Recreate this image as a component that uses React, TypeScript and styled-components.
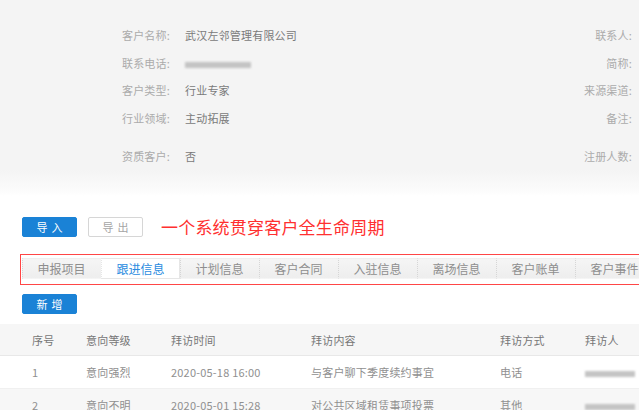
import styled, { createGlobalStyle } from "styled-components";

const GlobalStyle = createGlobalStyle`
    body {
        margin: 0;
        background: #ffffff;
        font-family: "Noto Sans CJK SC", "Liberation Sans", sans-serif;
    }
`;

const Page = styled.div`
    width: 639px;
    height: 410px;
    overflow: hidden;
    position: relative;
`;

const InfoPanel = styled.div`
    height: 196px;
    box-sizing: border-box;
    padding: 21px 7px 0 0;
    background: linear-gradient(to bottom, #f4f4f4 0, #f4f4f4 170px, #fbfbfb 190px, #ffffff 196px);
`;

const InfoRow = styled.div<{ $gap?: number }>`
    display: grid;
    grid-template-columns: 170px 1fr auto;
    height: 27.7px;
    align-items: center;
    margin-top: ${(p) => p.$gap || 0}px;
    font-size: 11px;
    letter-spacing: 0.2px;
`;

const Label = styled.span`
    color: #ababab;
    text-align: right;
`;

const Value = styled.span`
    color: #7a7a7a;
    padding-left: 15px;
`;

const Blur = styled.span<{ $w: number }>`
    display: inline-block;
    width: ${(p) => p.$w}px;
    height: 6px;
    background: #c4c4c4;
    filter: blur(1.2px);
    vertical-align: middle;
`;

const Content = styled.div`
    padding: 21px 0 0 22px;
`;

const Toolbar = styled.div`
    display: flex;
    align-items: center;
    height: 20px;
`;

const Button = styled.button<{ $primary?: boolean }>`
    width: 55px;
    height: 20px;
    box-sizing: border-box;
    border-radius: 2px;
    font-family: inherit;
    font-size: 11px;
    letter-spacing: 4px;
    text-indent: 4px;
    padding: 0;
    line-height: 18px;
    border: 1px solid ${(p) => (p.$primary ? "#1a82d6" : "#d6d6d6")};
    background: ${(p) => (p.$primary ? "#1a82d6" : "#ffffff")};
    color: ${(p) => (p.$primary ? "#ffffff" : "#a5a5a5")};
    margin-right: 11px;
`;

const Slogan = styled.span`
    margin-left: 7px;
    color: #ff3030;
    font-size: 17px;
    letter-spacing: 0.2px;
    margin-top: -2px;
`;

const TabFrame = styled.div`
    margin: 17px 0 0 -2px;
    width: 640px;
    height: 31px;
    box-sizing: border-box;
    border: 1.5px solid #ff4646;
    border-right: none;
    padding: 3px 0 0 1px;
    overflow: hidden;
`;

const Tabs = styled.div`
    display: flex;
    width: 700px;
`;

const Tab = styled.div<{ $active?: boolean }>`
    flex: 0 0 79px;
    height: 21px;
    box-sizing: border-box;
    display: flex;
    align-items: center;
    justify-content: center;
    font-size: 12px;
    color: ${(p) => (p.$active ? "#2a8be0" : "#8e8e8e")};
    background: ${(p) => (p.$active ? "#ffffff" : "linear-gradient(#f5f5f5, #eeeeee)")};
    border: 1px solid ${(p) => (p.$active ? "#e6e6e6" : "transparent")};
    border-left: 1px dotted ${(p) => (p.$active ? "#e6e6e6" : "#d6d6d6")};
`;

const NewRow = styled.div`
    display: flex;
    margin-top: 9px;
    height: 20px;
`;

const Table = styled.div`
    margin: 10px 0 0 -22px;
    font-size: 11px;
    letter-spacing: 0.2px;
`;

const TRow = styled.div<{ $head?: boolean; $shade?: boolean }>`
    display: grid;
    grid-template-columns: 54px 85px 140px 189px 85px 1fr;
    align-items: center;
    padding-left: 32px;
    box-sizing: border-box;
    height: ${(p) => (p.$head ? 32 : 33)}px;
    background: ${(p) => (p.$head ? "#f6f6f6" : p.$shade ? "#f7f7f7" : "#ffffff")};
    border-bottom: 1px solid ${(p) => (p.$head ? "#e8e8e8" : "#f0f0f0")};
    color: ${(p) => (p.$head ? "#777" : "#909090")};
`;

const info = [
    ["客户名称:", "武汉左邻管理有限公司", "联系人:"],
    ["联系电话:", null, "简称:"],
    ["客户类型:", "行业专家", "来源渠道:"],
    ["行业领域:", "主动拓展", "备注:"],
    ["资质客户:", "否", "注册人数:"],
];

const tabs = ["申报项目", "跟进信息", "计划信息", "客户合同", "入驻信息", "离场信息", "客户账单", "客户事件"];

const rows = [
    ["1", "意向强烈", "2020-05-18 16:00", "与客户聊下季度续约事宜", "电话"],
    ["2", "意向不明", "2020-05-01 15:28", "对公共区域租赁事项投票", "其他"],
];

const App = () => {
    return (
        <Page>
            <GlobalStyle />
            <InfoPanel>
                {info.map((r, i) => (
                    <InfoRow key={r[0] as string} $gap={i === 4 ? 10 : 0}>
                        <Label>{r[0]}</Label>
                        <Value>{r[1] === null ? <Blur $w={66} /> : r[1]}</Value>
                        <Label>{r[2]}</Label>
                    </InfoRow>
                ))}
            </InfoPanel>
            <Content>
                <Toolbar>
                    <Button $primary>导入</Button>
                    <Button>导出</Button>
                    <Slogan>一个系统贯穿客户全生命周期</Slogan>
                </Toolbar>
                <TabFrame>
                    <Tabs>
                        {tabs.map((t, i) => (
                            <Tab key={t} $active={i === 1}>
                                {t}
                            </Tab>
                        ))}
                    </Tabs>
                </TabFrame>
                <NewRow>
                    <Button $primary>新增</Button>
                </NewRow>
                <Table>
                    <TRow $head>
                        <span>序号</span>
                        <span>意向等级</span>
                        <span>拜访时间</span>
                        <span>拜访内容</span>
                        <span>拜访方式</span>
                        <span>拜访人</span>
                    </TRow>
                    {rows.map((r, i) => (
                        <TRow key={r[0]} $shade={i % 2 === 1}>
                            {r.map((c) => (
                                <span key={c}>{c}</span>
                            ))}
                            <span>
                                <Blur $w={50} />
                            </span>
                        </TRow>
                    ))}
                </Table>
            </Content>
        </Page>
    );
};

export default App;
